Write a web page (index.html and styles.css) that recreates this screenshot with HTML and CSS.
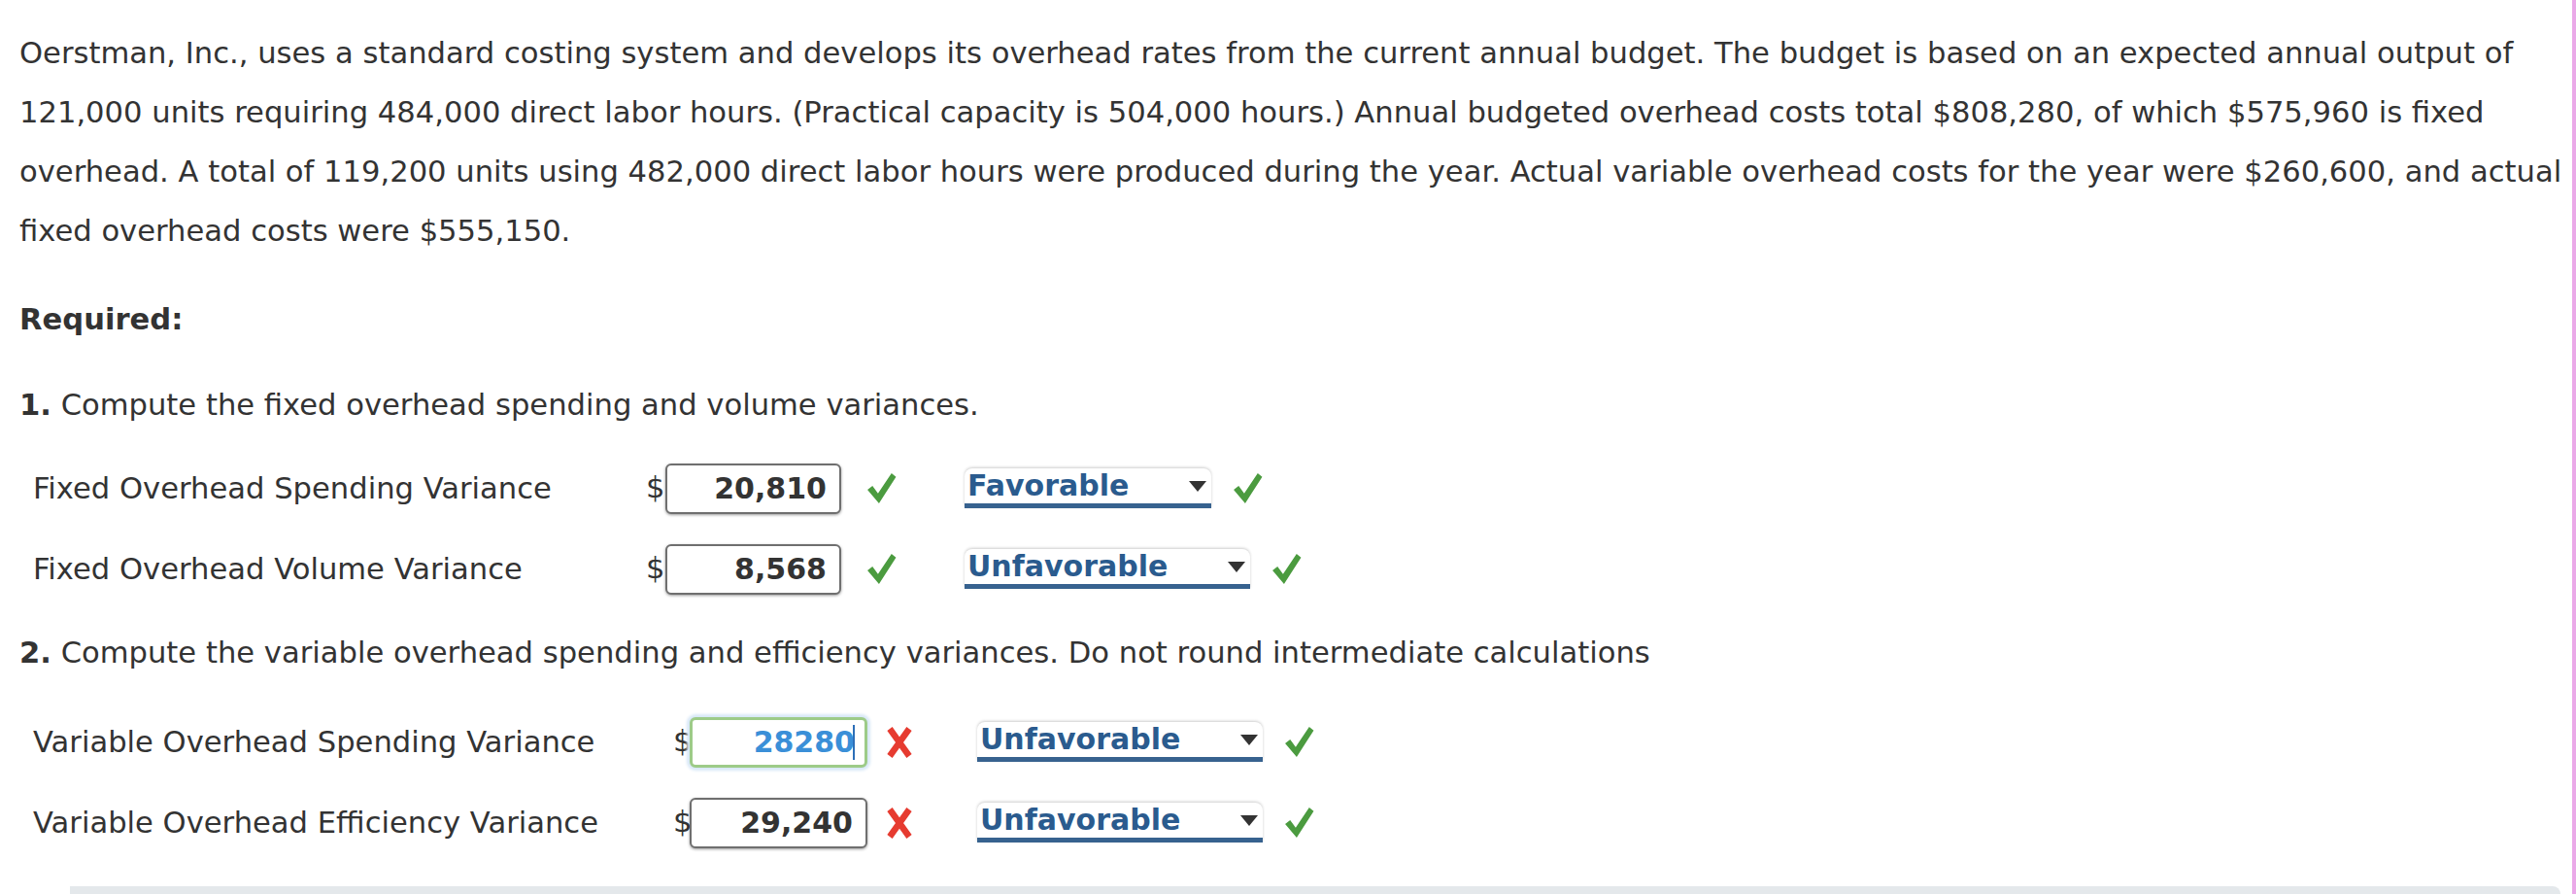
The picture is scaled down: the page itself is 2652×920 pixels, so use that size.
FILE: index.html
```html
<!DOCTYPE html>
<html>
<head>
<meta charset="utf-8">
<link rel="stylesheet" href="styles.css">
</head>
<body>
<div class="page">
  <main class="content">
    <p class="intro">Oerstman, Inc., uses a standard costing system and develops its overhead rates from the current annual budget. The budget is based on an expected annual output of 121,000 units requiring 484,000 direct labor hours. (Practical capacity is 504,000 hours.) Annual budgeted overhead costs total $808,280, of which $575,960 is fixed overhead. A total of 119,200 units using 482,000 direct labor hours were produced during the year. Actual variable overhead costs for the year were $260,600, and actual fixed overhead costs were $555,150.</p>
    <p class="required"><strong>Required:</strong></p>
    <p class="question q1"><strong>1.</strong> Compute the fixed overhead spending and volume variances.</p>
    <div class="answers s1">
      <div class="row">
        <span class="label">Fixed Overhead Spending Variance</span>
        <span class="dollar">$</span>
        <span class="box"><span class="val">20,810</span></span>
        <span class="mark"><svg class="check" viewBox="0 0 30 32"><path d="M1 17.5 L6 13.5 L11.5 21 L25 1 L29.5 4.5 L12.5 31 Z"/></svg></span>
        <span class="pick"><span class="select"><span class="opt">Favorable</span><span class="arrow"></span></span><svg class="check" viewBox="0 0 30 32"><path d="M1 17.5 L6 13.5 L11.5 21 L25 1 L29.5 4.5 L12.5 31 Z"/></svg></span>
      </div>
      <div class="row">
        <span class="label">Fixed Overhead Volume Variance</span>
        <span class="dollar">$</span>
        <span class="box"><span class="val">8,568</span></span>
        <span class="mark"><svg class="check" viewBox="0 0 30 32"><path d="M1 17.5 L6 13.5 L11.5 21 L25 1 L29.5 4.5 L12.5 31 Z"/></svg></span>
        <span class="pick"><span class="select"><span class="opt">Unfavorable</span><span class="arrow"></span></span><svg class="check" viewBox="0 0 30 32"><path d="M1 17.5 L6 13.5 L11.5 21 L25 1 L29.5 4.5 L12.5 31 Z"/></svg></span>
      </div>
    </div>
    <p class="question q2"><strong>2.</strong> Compute the variable overhead spending and efficiency variances. Do not round intermediate calculations</p>
    <div class="answers s2">
      <div class="row">
        <span class="label">Variable Overhead Spending Variance</span>
        <span class="dollar">$</span>
        <span class="box active"><span class="val">28280<span class="caret"></span></span></span>
        <span class="mark"><svg class="cross" viewBox="0 0 28 34"><path d="M4 3 L24 31 M24 3 L4 31"/></svg></span>
        <span class="pick"><span class="select"><span class="opt">Unfavorable</span><span class="arrow"></span></span><svg class="check" viewBox="0 0 30 32"><path d="M1 17.5 L6 13.5 L11.5 21 L25 1 L29.5 4.5 L12.5 31 Z"/></svg></span>
      </div>
      <div class="row">
        <span class="label">Variable Overhead Efficiency Variance</span>
        <span class="dollar">$</span>
        <span class="box"><span class="val">29,240</span></span>
        <span class="mark"><svg class="cross" viewBox="0 0 28 34"><path d="M4 3 L24 31 M24 3 L4 31"/></svg></span>
        <span class="pick"><span class="select"><span class="opt">Unfavorable</span><span class="arrow"></span></span><svg class="check" viewBox="0 0 30 32"><path d="M1 17.5 L6 13.5 L11.5 21 L25 1 L29.5 4.5 L12.5 31 Z"/></svg></span>
      </div>
    </div>
    <div class="footer-bar"></div>
  </main>
  <div class="edge"></div>
</div>
</body>
</html>
```

FILE: styles.css
```css
html, body {
  margin: 0;
  padding: 0;
  background: #ffffff;
}

body {
  font-family: "DejaVu Sans", Verdana, sans-serif;
  font-size: 30.6px;
  color: #333333;
}

.page {
  display: flex;
  width: 2652px;
  height: 920px;
  overflow: hidden;
}

.content {
  flex: 1;
  padding: 24px 6px 0 20px;
  display: flex;
  flex-direction: column;
}

.edge {
  width: 4px;
  background: #eaa9e8;
}

p {
  margin: 0;
  line-height: 61px;
}

.required {
  margin-top: 30px;
}

.required strong,
.question strong {
  font-weight: bold;
  color: #333;
}

.q1 {
  margin-top: 27px;
}

.q2 {
  margin-top: 14px;
}

.answers {
  display: flex;
  flex-direction: column;
  padding-left: 14px;
}

.s1 {
  margin-top: 14px;
}

.s2 {
  margin-top: 20px;
}

.row {
  display: grid;
  align-items: center;
  height: 83px;
}

.s1 .row {
  grid-template-columns: 631px 20px 181px 127px auto;
}

.s2 .row {
  grid-template-columns: 659px 17px 183px 113px auto;
}

.label {
  white-space: nowrap;
}

.dollar {
  line-height: 1;
}

.box {
  height: 52px;
  box-sizing: border-box;
  border: 2px solid #6f6f6f;
  border-radius: 6px;
  box-shadow: 0 1px 3px rgba(0, 0, 0, 0.4);
  display: flex;
  align-items: center;
  justify-content: flex-end;
  padding-right: 13px;
  background: #fff;
}

.val {
  font-size: 30px;
  font-weight: bold;
  color: #333;
  display: inline-flex;
  align-items: center;
}

.box.active {
  border: 3px solid #9dcb88;
  box-shadow: 0 0 3px 3px #d8e8f7;
  padding-right: 10px;
}

.box.active .val {
  color: #3a8fd8;
}

.caret {
  display: inline-block;
  width: 2px;
  height: 36px;
  margin-left: -2px;
  background: #2d6fb8;
}

.mark {
  display: flex;
  align-items: center;
}

.s1 .mark {
  padding-left: 26px;
}

.s2 .mark {
  padding-left: 19px;
}

.check {
  width: 31px;
  height: 33px;
  fill: #4b9b3f;
}

.cross {
  width: 28px;
  height: 34px;
  stroke: #e63b30;
  stroke-width: 6.5;
  fill: none;
}

.pick {
  display: flex;
  align-items: center;
  gap: 22px;
}

.select {
  display: inline-flex;
  align-items: center;
  height: 36px;
  padding: 0 5px 0 3px;
  background: #fff;
  border-radius: 8px 8px 0 0;
  border-bottom: 5px solid #37628f;
  box-shadow: 0 -1px 3px rgba(0, 0, 0, 0.2);
}

.opt {
  font-size: 30px;
  font-weight: bold;
  color: #2a5b8e;
  line-height: 34px;
}

.arrow {
  width: 0;
  height: 0;
  margin-left: 62px;
  border-left: 9px solid transparent;
  border-right: 9px solid transparent;
  border-top: 11px solid #333;
}

.footer-bar {
  margin-top: auto;
  margin-left: 52px;
  margin-right: 6px;
  height: 8px;
  background: #e4e8eb;
  border-radius: 0 8px 0 0;
}
```
